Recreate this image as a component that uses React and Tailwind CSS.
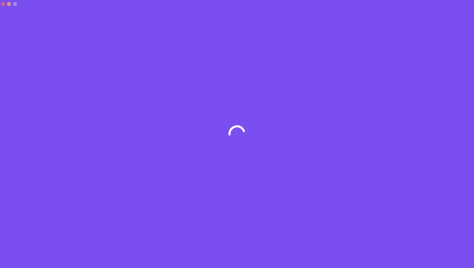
import React from 'react'

const App = () => {
  return (
    <div className="relative flex h-screen w-full items-center justify-center bg-[#7b4fef]">
      {/* window dots */}
      <div className="absolute left-[1px] top-[2px] flex gap-[2px]">
        <span className="h-1 w-1 rounded-full bg-[#e0607e]" />
        <span className="h-1 w-1 rounded-full bg-[#d2a07c]" />
        <span className="h-1 w-1 rounded-full bg-[#a68cf2]" />
      </div>

      {/* loader */}
      <svg width="18" height="18" viewBox="0 0 18 18" fill="none">
        <path
          d="M1.5 9.5 A7.5 7.5 0 0 1 16 6.2"
          stroke="white"
          strokeWidth="2"
          strokeLinecap="round"
        />
      </svg>
    </div>
  )
}

export default App
